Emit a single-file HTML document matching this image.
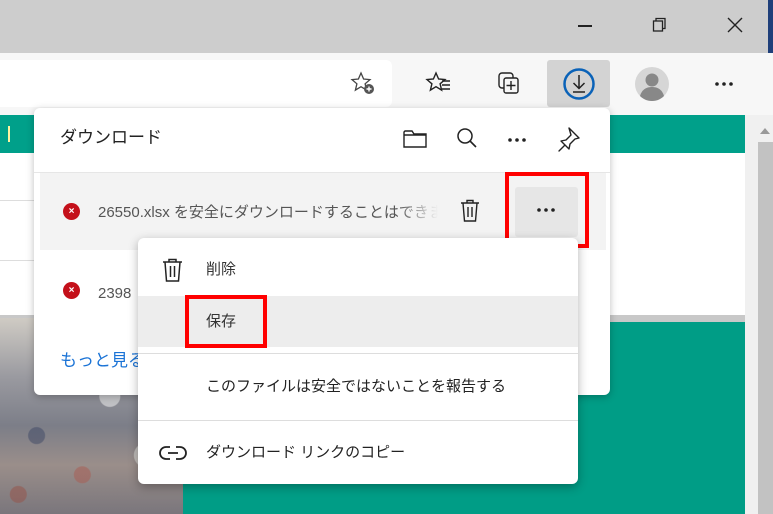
<!DOCTYPE html>
<html><head><meta charset="utf-8"><style>
*{margin:0;padding:0;box-sizing:border-box}
body{width:773px;height:514px;overflow:hidden;position:relative;background:#fff;font-family:"Liberation Sans","Noto Sans CJK JP",sans-serif;color:#222}
.abs{position:absolute}
svg{position:absolute;overflow:visible}
.t{position:absolute;white-space:nowrap;font-size:15px;line-height:20px}
.x{width:17px;height:17px;border-radius:50%;background:#c4101a;color:#fff;font-size:10px;font-weight:bold;line-height:17px;text-align:center}
</style></head><body>
<div class="abs" style="left:0;top:0;width:773px;height:53px;background:#cdcdcd"></div>
<div class="abs" style="left:768px;top:0;width:5px;height:53px;background:#1f3f7a"></div>
<div class="abs" style="left:578px;top:25px;width:14px;height:1.5px;background:#222"></div>
<svg style="left:652px;top:17px" width="16" height="16"><rect x="1.5" y="4" width="9" height="10" fill="none" stroke="#222" stroke-width="1.3"/><path d="M4 4V1.5h9v10h-2.5" fill="none" stroke="#222" stroke-width="1.3"/></svg>
<svg style="left:727px;top:17px" width="16" height="16"><path d="M1 1L15 15M15 1L1 15" stroke="#222" stroke-width="1.4"/></svg>
<div class="abs" style="left:0;top:53px;width:773px;height:62px;background:#f7f7f7"></div>
<div class="abs" style="left:0;top:60px;width:392px;height:47px;background:#fff;border-radius:0 6px 6px 0"></div>
<svg style="left:350px;top:70px" width="26" height="26"><path d="M11 3l2.6 6 6.4.6-4.9 4.2 1.5 6.3-5.6-3.4-5.6 3.4 1.5-6.3L2 9.6l6.4-.6z" fill="none" stroke="#444" stroke-width="1.3"/><circle cx="19" cy="19" r="5" fill="#555"/><path d="M19 16.5v5M16.5 19h5" stroke="#fff" stroke-width="1.4"/></svg>
<svg style="left:425px;top:70px" width="28" height="26"><path d="M11 3l2.6 6 6.4.6-4.9 4.2 1.5 6.3-5.6-3.4-5.6 3.4 1.5-6.3L2 9.6l6.4-.6z" fill="#f7f7f7" stroke="#222" stroke-width="1.4"/><path d="M17 11h8M17 15h8M17 19h8" stroke="#222" stroke-width="1.4"/></svg>
<svg style="left:497px;top:70px" width="26" height="26"><rect x="2" y="3" width="14" height="15" rx="3" fill="none" stroke="#222" stroke-width="1.4"/><rect x="7" y="8" width="14" height="15" rx="2" fill="#f7f7f7" stroke="#222" stroke-width="1.4"/><path d="M14 11v9M9.5 15.5h9" stroke="#222" stroke-width="1.4"/></svg>
<div class="abs" style="left:547px;top:60px;width:63px;height:47px;background:#d3d3d3;border-radius:3px"></div>
<svg style="left:562px;top:67px" width="34" height="34"><circle cx="17" cy="17" r="14.5" fill="none" stroke="#0a62b8" stroke-width="2.5"/><path d="M17 8v13M11.5 16l5.5 5.5 5.5-5.5M11 25h12" fill="none" stroke="#222" stroke-width="1.5"/></svg>
<svg style="left:634px;top:66px" width="36" height="36"><circle cx="18" cy="18" r="17" fill="#d6d6d6"/><circle cx="18" cy="14" r="6.5" fill="#888"/><path d="M6 30c2-7 7-9 12-9s10 2 12 9c-3 3-7 5-12 5s-9-2-12-5z" fill="#888"/></svg>
<svg style="left:715px;top:82px" width="20" height="6"><circle cx="2" cy="2" r="1.8" fill="#222"/><circle cx="9" cy="2" r="1.8" fill="#222"/><circle cx="16" cy="2" r="1.8" fill="#222"/></svg>
<div class="abs" style="left:0;top:115px;width:745px;height:38px;background:#00a08a"></div>
<div class="abs" style="left:8px;top:126px;width:2px;height:16px;background:#fff3a0"></div>
<div class="abs" style="left:0;top:153px;width:745px;height:162px;background:#fff"></div>
<div class="abs" style="left:0;top:200px;width:34px;height:1px;background:#ddd"></div>
<div class="abs" style="left:0;top:260px;width:34px;height:1px;background:#ddd"></div>
<div class="abs" style="left:0;top:315px;width:745px;height:7px;background:#c8c8c8"></div>
<div class="abs" style="left:0;top:318px;width:183px;height:196px;background:linear-gradient(180deg,#cfcbc4 0%,#9a9aa0 30%,#7c7e88 55%,#9a8e8a 75%,#7a767c 100%)"></div>
<div class="abs" style="left:0;top:318px;width:183px;height:196px;background:radial-gradient(circle at 20% 60%,rgba(60,70,100,.5) 0 8px,transparent 9px),radial-gradient(circle at 60% 40%,rgba(230,230,230,.6) 0 10px,transparent 11px),radial-gradient(circle at 45% 80%,rgba(170,90,80,.5) 0 8px,transparent 9px),radial-gradient(circle at 80% 70%,rgba(220,220,215,.6) 0 12px,transparent 13px),radial-gradient(circle at 10% 90%,rgba(150,80,70,.5) 0 8px,transparent 9px),radial-gradient(circle at 85% 30%,rgba(60,70,100,.4) 0 9px,transparent 10px)"></div>
<div class="abs" style="left:183px;top:322px;width:562px;height:192px;background:#009d86"></div>
<div class="abs" style="left:745px;top:115px;width:28px;height:399px;background:#f0f0f0"></div>
<div class="abs" style="left:758px;top:142px;width:15px;height:372px;background:#c2c2c2"></div>
<div class="abs" style="left:760px;top:128px;width:0;height:0;border-left:5px solid transparent;border-right:5px solid transparent;border-bottom:6px solid #999"></div>
<div class="abs" style="left:34px;top:108px;width:576px;height:287px;background:#fff;border-radius:6px;box-shadow:0 2px 8px rgba(0,0,0,.25)"></div>
<div class="t" style="left:60px;top:128px;font-size:17px;color:#222">ダウンロード</div>
<svg style="left:402px;top:127px" width="26" height="24"><path d="M2 5v15h22V7H12l-2-3H3z M2 8h22" fill="none" stroke="#222" stroke-width="1.4"/></svg>
<svg style="left:455px;top:126px" width="24" height="24"><circle cx="10" cy="10" r="7" fill="none" stroke="#222" stroke-width="1.5"/><path d="M15 15l6 6" stroke="#222" stroke-width="1.6"/></svg>
<svg style="left:508px;top:138px" width="20" height="6"><circle cx="2" cy="2" r="1.8" fill="#222"/><circle cx="9" cy="2" r="1.8" fill="#222"/><circle cx="16" cy="2" r="1.8" fill="#222"/></svg>
<svg style="left:555px;top:125px" width="28" height="28"><path d="M14 3l10 10-4 1-5 5-1 5-4-4-6 6 6-6-4-4 5-1 5-5z" fill="none" stroke="#222" stroke-width="1.4" stroke-linejoin="round"/></svg>
<div class="abs" style="left:34px;top:172px;width:576px;height:1px;background:#e6e6e6"></div>
<div class="abs" style="left:40px;top:173px;width:566px;height:77px;background:#f3f3f3"></div>
<div class="abs x" style="left:63px;top:203px">×</div>
<div class="t" style="left:98px;top:203px;color:#555;width:340px;overflow:hidden;-webkit-mask-image:linear-gradient(90deg,#000 88%,transparent)">26550.xlsx を安全にダウンロードすることはできません</div>
<svg style="left:459px;top:199px" width="22" height="24"><path d="M2 4h18M8 4V1.5h6V4M4 4l1.5 18h11L18 4M9 8v10M13 8v10" fill="none" stroke="#222" stroke-width="1.4"/></svg>
<div class="abs" style="left:515px;top:187px;width:63px;height:50px;background:#e6e6e6;border-radius:3px"></div>
<svg style="left:537px;top:208px" width="20" height="6"><circle cx="2" cy="2" r="1.8" fill="#222"/><circle cx="9" cy="2" r="1.8" fill="#222"/><circle cx="16" cy="2" r="1.8" fill="#222"/></svg>
<div class="abs" style="left:505px;top:172px;width:84px;height:76px;border:4px solid #f00"></div>
<div class="abs x" style="left:63px;top:282px">×</div>
<div class="t" style="left:98px;top:284px;color:#555">2398</div>
<div class="t" style="left:60px;top:351px;font-size:17px;color:#1a73d6">もっと見る</div>
<div class="abs" style="left:138px;top:238px;width:440px;height:246px;background:#fff;border-radius:6px;box-shadow:0 3px 10px rgba(0,0,0,.3)"></div>
<svg style="left:161px;top:258px" width="24" height="26"><path d="M2 4h19M8 4V1.5h7V4M4 4l1.5 19h12L19 4M9.5 8v11M13.5 8v11" fill="none" stroke="#222" stroke-width="1.5"/></svg>
<div class="t" style="left:206px;top:260px;color:#333">削除</div>
<div class="abs" style="left:138px;top:296px;width:440px;height:51px;background:#ededed"></div>
<div class="t" style="left:206px;top:312px;color:#333">保存</div>
<div class="abs" style="left:185px;top:295px;width:82px;height:53px;border:4px solid #f00"></div>
<div class="abs" style="left:138px;top:353px;width:440px;height:1px;background:#ddd"></div>
<div class="t" style="left:206px;top:377px;color:#222">このファイルは安全ではないことを報告する</div>
<div class="abs" style="left:138px;top:420px;width:440px;height:1px;background:#ddd"></div>
<svg style="left:160px;top:444px" width="26" height="18"><path d="M10 3H6a6 6 0 0 0 0 12h4M16 3h4a6 6 0 0 1 0 12h-4M8 9h10" fill="none" stroke="#222" stroke-width="1.8"/></svg>
<div class="t" style="left:206px;top:443px;color:#222">ダウンロード リンクのコピー</div>
</body></html>
